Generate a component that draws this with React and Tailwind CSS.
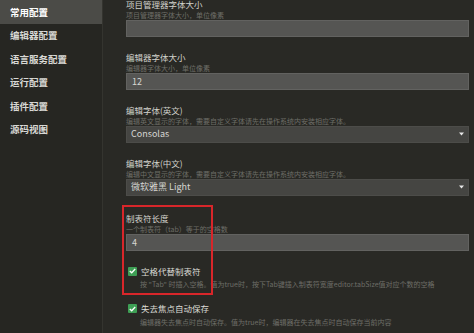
import React from "react";

const font = { fontFamily: '"Noto Sans CJK SC", "Noto Sans", sans-serif' };

const menu = ["常用配置", "编辑器配置", "语言服务配置", "运行配置", "插件配置", "源码视图"];

function Field({ label, desc, children }) {
  return (
    <div className="flex flex-col">
      <div className="h-[11px] text-[8.5px] leading-[11px] text-[#d2d2cc]">{label}</div>
      <div className="h-[10px] whitespace-nowrap text-[7px] leading-[10px] text-[#6e6e68]">{desc}</div>
      {children}
    </div>
  );
}

function TextBox({ value }) {
  return (
    <div className="h-[17px] border border-[#626260] bg-[#555553] px-[5px] text-[9px] leading-[15px] text-[#d6d6d2]">
      {value}
    </div>
  );
}

function SelectBox({ value }) {
  return (
    <div className="flex h-[17px] items-center justify-between border border-[#4c4c49] bg-[#454542] pl-[4px] pr-[4px] text-[9px] text-[#d6d6d2]">
      <span>{value}</span>
      <svg width="5" height="4" viewBox="0 0 5 4">
        <path d="M0 0.5 H5 L2.5 3.5 Z" fill="#e8e8e8" />
      </svg>
    </div>
  );
}

function Check({ label, desc }) {
  return (
    <div className="flex flex-col">
      <div className="flex h-[12px] items-center gap-[4px] pl-[2px]">
        <div className="flex h-[9px] w-[9px] items-center justify-center rounded-[1px] bg-[#3e9f55]">
          <svg width="7" height="6" viewBox="0 0 7 6">
            <path d="M0.8 3 L2.7 4.8 L6.2 1" stroke="#ffffff" strokeWidth="1.3" fill="none" />
          </svg>
        </div>
        <span className="text-[8.5px] text-[#dcdcd6]">{label}</span>
      </div>
      <div className="mt-[2px] h-[11px] whitespace-nowrap pl-[14px] text-[7px] leading-[11px] text-[#6e6e68]">
        {desc}
      </div>
    </div>
  );
}

export default function App() {
  return (
    <div className="flex h-[333px] w-[474px] overflow-hidden bg-[#292925]" style={font}>
      <div className="flex w-[103px] flex-shrink-0 flex-col border-r border-[#34342f] bg-[#262622]">
        {menu.map((item, i) => (
          <div
            key={item}
            className={`flex h-[23.5px] items-center pl-[10px] text-[9.5px] font-bold ${
              i === 0 ? "bg-[#4b4b47] text-white" : "text-[#d8d8d4]"
            }`}
          >
            {item}
          </div>
        ))}
      </div>

      <div className="flex flex-1 flex-col pl-[23px] pr-[5px] pt-0">
        <div className="mt-[-1.5px] flex flex-col gap-[15px]">
          <Field label="项目管理器字体大小" desc="项目管理器字体大小，单位像素">
            <TextBox value="" />
          </Field>
          <Field label="编辑器字体大小" desc="编辑器字体大小，单位像素">
            <TextBox value="12" />
          </Field>
          <Field label="编辑字体(英文)" desc="编辑英文显示的字体，需要自定义字体请先在操作系统内安装相应字体。">
            <SelectBox value="Consolas" />
          </Field>
          <Field label="编辑字体(中文)" desc="编辑中文显示的字体，需要自定义字体请先在操作系统内安装相应字体。">
            <SelectBox value="微软雅黑 Light" />
          </Field>
        </div>

        <div className="relative mt-[17px] flex flex-col">
          <Field label="制表符长度" desc="一个制表符（tab）等于的空格数">
            <TextBox value="4" />
          </Field>
          <div className="mt-[14.5px]">
            <Check
              label="空格代替制表符"
              desc="按 &quot;Tab&quot; 时插入空格。值为true时，按下Tab键插入制表符宽度editor.tabSize值对应个数的空格"
            />
          </div>
          <div className="absolute left-[-4px] top-[-7.5px] h-[90px] w-[91px] border-2 border-[#d8262a]" />
        </div>

        <div className="mt-[12.5px]">
          <Check
            label="失去焦点自动保存"
            desc="编辑器失去焦点时自动保存。值为true时，编辑器在失去焦点时自动保存当前内容"
          />
        </div>
      </div>
    </div>
  );
}
